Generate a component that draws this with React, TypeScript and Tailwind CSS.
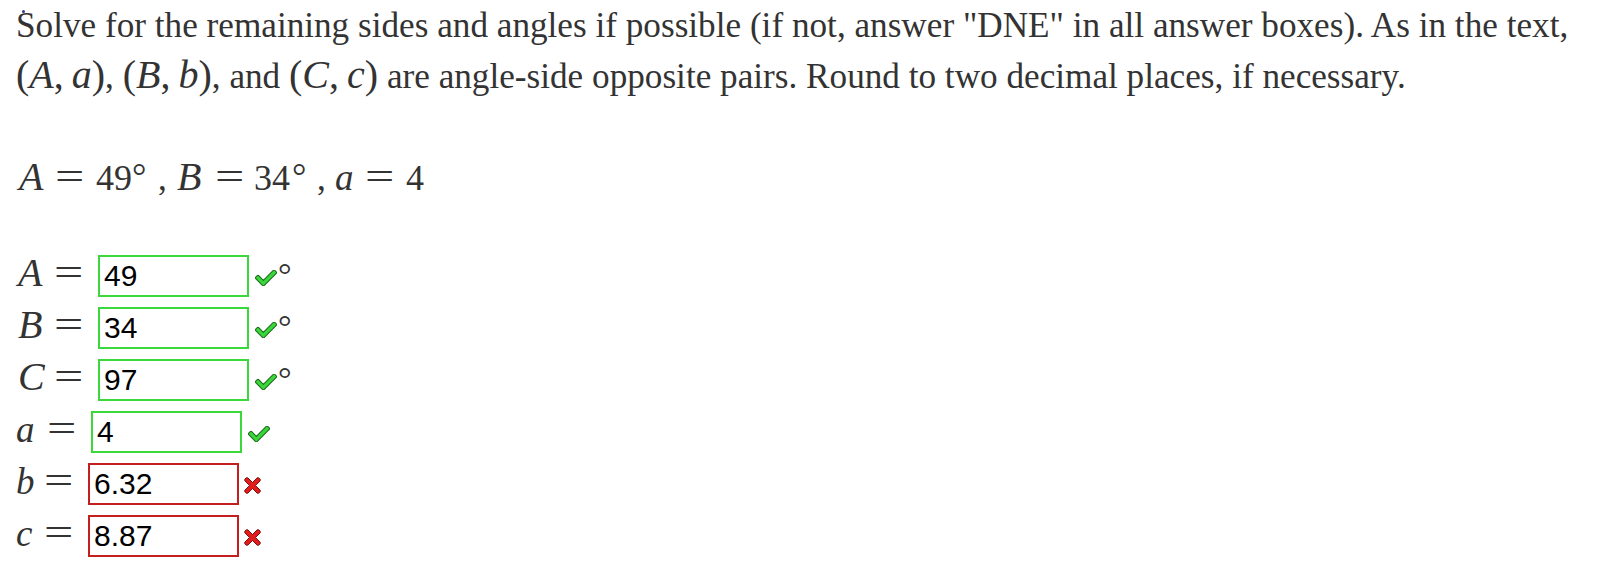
import React from "react";

const MATH = "text-[40px] leading-none";

// TeX-like wide equals sign inside a fixed-width box
function Eq({ w }: { w: string }) {
  return (
    <span className={`inline-block shrink-0 ${w}`}>
      <span className="inline-block origin-left scale-x-[1.3]">=</span>
    </span>
  );
}

function CheckMark() {
  return (
    <svg viewBox="-10 62 532 388" className="w-[22px] h-[16px] shrink-0" aria-hidden>
      <path
        d="M173.898 439.404l-166.4-166.4c-9.997-9.997-9.997-26.206 0-36.204l36.203-36.204c9.997-9.998 26.207-9.998 36.204 0L192 312.69 432.095 72.596c9.997-9.997 26.207-9.997 36.204 0l36.203 36.204c9.997 9.997 9.997 26.206 0 36.204l-294.4 294.401c-9.998 9.997-26.207 9.997-36.204-.001z"
        fill="#38d838"
        stroke="#1f6a1f"
        strokeWidth="26"
        strokeLinejoin="round"
      />
    </svg>
  );
}

function CrossMark() {
  return (
    <svg viewBox="-14 70 380 372" className="w-[17px] h-[17px] shrink-0" aria-hidden>
      <path
        d="M242.72 256l100.07-100.07c12.28-12.28 12.28-32.19 0-44.48l-22.24-22.24c-12.28-12.28-32.19-12.28-44.48 0L176 189.28 75.930 89.21c-12.28-12.28-32.19-12.28-44.48 0L9.21 111.45c-12.28 12.280-12.28 32.19 0 44.48L109.28 256 9.21 356.07c-12.28 12.28-12.28 32.19 0 44.48l22.24 22.24c12.28 12.28 32.2 12.28 44.48 0L176 322.72l100.07 100.07c12.28 12.28 32.2 12.28 44.48 0l22.24-22.24c12.28-12.28 12.28-32.19 0-44.48L242.72 256z"
        fill="#e01c1c"
        stroke="#7a0c0c"
        strokeWidth="22"
        strokeLinejoin="round"
      />
    </svg>
  );
}

type Row = {
  v: string;
  lw: string;
  vc: string;
  value: string;
  ok: boolean;
  deg: boolean;
};

const rows: Row[] = [
  { v: "A", lw: "w-[38px] pl-[2px]", vc: "", value: "49", ok: true, deg: true },
  { v: "B", lw: "w-[38px] pl-[2px]", vc: "", value: "34", ok: true, deg: true },
  { v: "C", lw: "w-[38px] pl-[2px]", vc: "", value: "97", ok: true, deg: true },
  { v: "a", lw: "w-[31px]", vc: "text-[37px]", value: "4", ok: true, deg: false },
  { v: "b", lw: "w-[28px]", vc: "text-[37px]", value: "6.32", ok: false, deg: false },
  { v: "c", lw: "w-[28px]", vc: "text-[37px]", value: "8.87", ok: false, deg: false },
];

function AnswerRow({ r }: { r: Row }) {
  return (
    <div className="flex h-[52px] items-baseline">
      <span className={`${MATH} ${r.lw} shrink-0`}>
        <i className={r.vc}>{r.v}</i>
      </span>
      <span className={`${MATH} w-[44px] shrink-0`}>
        <Eq w="w-[27px]" />
      </span>
      <div
        className={`flex h-[42px] w-[151px] shrink-0 items-center border-2 bg-white pl-[4px] font-['Liberation_Sans',Arial,sans-serif] text-[30px] leading-[38px] text-black ${
          r.ok ? "border-[#3ad83a]" : "border-[#c41f1f]"
        }`}
      >
        {r.value}
      </div>
      <span className={r.ok ? "ml-[6px]" : "ml-[5px]"}>{r.ok ? <CheckMark /> : <CrossMark />}</span>
      {r.deg && <span className="ml-[1px] text-[34px] leading-none text-[#333]">°</span>}
    </div>
  );
}

export default function App() {
  return (
    <div className="min-h-screen bg-white pl-[16px] font-['Liberation_Serif','Times_New_Roman',serif] text-[#333]">
      <p className="relative text-[35.2px] leading-[51px] whitespace-nowrap">
        <span className="absolute left-[6px] top-[10px] h-[3px] w-[3px] rounded-full bg-[#2a3a9a]" />
        Solve for the remaining sides and angles if possible (if not, answer "DNE" in all answer boxes). As in the text,
        <br />
        <span className={MATH}>
          (<i>A</i>,<span className="ml-[8px]" />
          <i>a</i>)
        </span>
        ,{" "}
        <span className={MATH}>
          (<i>B</i>,<span className="ml-[8px]" />
          <i>b</i>)
        </span>
        , and{" "}
        <span className={MATH}>
          (<i>C</i>,<span className="ml-[8px]" />
          <i>c</i>)
        </span>{" "}
        are angle-side opposite pairs. Round to two decimal places, if necessary.
      </p>

      <div className="mt-[50px] flex items-baseline text-[40px] leading-[50px] whitespace-nowrap">
        <i className="ml-[3px] w-[36px] shrink-0">A</i>
        <Eq w="w-[41px]" />
        <span className="w-[36px] shrink-0 text-[36px]">49</span>
        <span className="relative top-[-2px] w-[26px] shrink-0 text-[36px]">°</span>
        <span className="w-[19px] shrink-0 text-[35.2px]">,</span>
        <i className="w-[38px] shrink-0">B</i>
        <Eq w="w-[39px]" />
        <span className="w-[38px] shrink-0 text-[36px]">34</span>
        <span className="relative top-[-2px] w-[25px] shrink-0 text-[36px]">°</span>
        <span className="w-[18px] shrink-0 text-[35.2px]">,</span>
        <i className="w-[30px] shrink-0 text-[37px]">a</i>
        <Eq w="w-[41px]" />
        <span className="text-[36px]">4</span>
      </div>

      <div className="mt-[49px]">
        {rows.map((r) => (
          <AnswerRow key={r.v} r={r} />
        ))}
      </div>
    </div>
  );
}
